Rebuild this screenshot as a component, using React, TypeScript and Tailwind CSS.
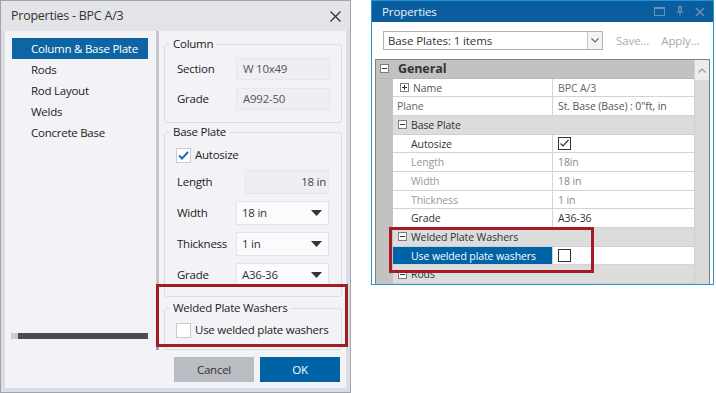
import React from "react";

const TreeBox = ({ plus }: { plus?: boolean }) => (
  <svg width="9" height="9" viewBox="0 0 9 9" className="shrink-0">
    <rect x="0.5" y="0.5" width="8" height="8" fill="#fff" stroke="#7d7d7d" />
    <line x1="2" y1="4.5" x2="7" y2="4.5" stroke="#333" />
    {plus && <line x1="4.5" y1="2" x2="4.5" y2="7" stroke="#333" />}
  </svg>
);

const Caret = () => (
  <svg width="11" height="6" viewBox="0 0 11 6">
    <path d="M0 0H11L5.5 6Z" fill="#333" />
  </svg>
);

const Combo = ({ value }: { value: string }) => (
  <div className="w-[93px] h-[24px] bg-[#fbfbfd] border border-[#e3e4e9] flex items-center pl-[5px] pr-[6px] text-[#333]">
    <span className="flex-1">{value}</span>
    <Caret />
  </div>
);

const ReadOnly = ({ value }: { value: string }) => (
  <div className="w-[94px] h-[22px] bg-[#efeff3] border border-[#e6e7eb] flex items-center pl-[6px] text-[#555]">
    {value}
  </div>
);

const Row = ({ label, children, mt }: { label: string; children: React.ReactNode; mt: string }) => (
  <div className={`flex items-center ${mt}`}>
    <span className="w-[59px] text-[#222]">{label}</span>
    {children}
  </div>
);

const navItems = ["Column & Base Plate", "Rods", "Rod Layout", "Welds", "Concrete Base"];

interface GridRow {
  kind: "cat" | "sub" | "prop";
  label: string;
  value?: string;
  indent?: string;
  plus?: boolean;
  labelColor?: string;
  valueColor?: string;
  check?: boolean;
  selected?: boolean;
}

const rows: GridRow[] = [
  { kind: "cat", label: "General" },
  { kind: "prop", label: "Name", value: "BPC A/3", plus: true, labelColor: "text-[#555]", valueColor: "text-[#666]" },
  { kind: "prop", label: "Plane", value: "St. Base (Base) : 0\"ft, in", indent: "pl-[4px]", labelColor: "text-[#666]", valueColor: "text-[#555]" },
  { kind: "sub", label: "Base Plate" },
  { kind: "prop", label: "Autosize", check: true, labelColor: "text-[#333]" },
  { kind: "prop", label: "Length", value: "18in", labelColor: "text-[#999]", valueColor: "text-[#888]" },
  { kind: "prop", label: "Width", value: "18 in", labelColor: "text-[#999]", valueColor: "text-[#888]" },
  { kind: "prop", label: "Thickness", value: "1 in", labelColor: "text-[#999]", valueColor: "text-[#888]" },
  { kind: "prop", label: "Grade", value: "A36-36", labelColor: "text-[#333]", valueColor: "text-[#333]" },
  { kind: "sub", label: "Welded Plate Washers" },
  { kind: "prop", label: "Use welded plate washers", check: false, selected: true },
  { kind: "sub", label: "Rods" },
];

const SmallCheck = ({ checked }: { checked: boolean }) => (
  <svg width="13" height="13" viewBox="0 0 13 13">
    <rect x="0.5" y="0.5" width="12" height="12" fill="#fff" stroke="#333" />
    {checked && <path d="M2.5 6.5L5 9L10.5 3" fill="none" stroke="#333" strokeWidth="1.2" />}
  </svg>
);

const GridLine = ({ r }: { r: GridRow }) => {
  if (r.kind === "cat") {
    return (
      <div className="h-[19px] flex items-center bg-[#c2c2c2] border-b border-[#b8b8b8]">
        <div className="w-[17px] flex justify-center"><TreeBox /></div>
        <span className="pl-[5px] font-bold text-[12.5px] text-[#333]">{r.label}</span>
      </div>
    );
  }
  if (r.kind === "sub") {
    return (
      <div className="h-[19px] flex bg-[#c2c2c2]">
        <div className="w-[17px]" />
        <div className="flex-1 flex items-center bg-[#dcdcdc] border-b border-[#cfcfcf] pl-[5px] gap-[4px] text-[#333]">
          <TreeBox />
          <span>{r.label}</span>
        </div>
      </div>
    );
  }
  return (
    <div className="h-[19px] flex bg-[#c2c2c2]">
      <div className="w-[17px]" />
      <div
        className={`w-[160px] flex items-center border-b border-r border-[#d4d4d4] ${
          r.selected ? "bg-[#0063a6] text-white" : `bg-white ${r.labelColor ?? ""}`
        } ${r.plus ? "pl-[7px] gap-[4px]" : r.indent ?? "pl-[18px]"}`}
      >
        {r.plus && <TreeBox plus />}
        <span>{r.label}</span>
      </div>
      <div className={`flex-1 flex items-center bg-white border-b border-[#d4d4d4] pl-[5px] ${r.valueColor ?? ""}`}>
        {r.check !== undefined ? <SmallCheck checked={r.check} /> : r.value}
      </div>
    </div>
  );
};

export default function App() {
  return (
    <div className="w-[716px] h-[393px] bg-white flex items-start relative overflow-hidden font-['Segoe_UI','Open_Sans',sans-serif] text-[11.5px] leading-[16px] tracking-[-0.25px]">
      {/* dialog */}
      <div className="w-[351px] h-[393px] flex flex-col bg-[#dcdde2] border border-[#a0a3ab]">
        <div className="h-[30px] flex items-center justify-between pl-[10px] pr-[9px] bg-[#e3e4e8] text-[12.5px] text-[#333]">
          <span>Properties - BPC A/3</span>
          <svg width="11" height="11" viewBox="0 0 11 11">
            <path d="M0.5 0.5L10.5 10.5M10.5 0.5L0.5 10.5" stroke="#333" strokeWidth="1.3" />
          </svg>
        </div>
        <div className="flex-1 flex mx-[4px] mb-[4px] bg-[#f3f3f7]">
          {/* nav */}
          <div className="w-[151px] flex flex-col pt-[7px] pl-[7px] pr-[8px]">
            {navItems.map((n, i) => (
              <div
                key={n}
                className={`h-[21px] flex items-center pl-[19px] ${i === 0 ? "bg-[#0f64a3] text-white" : "text-[#222]"}`}
              >
                {n}
              </div>
            ))}
            <div className="mt-auto mb-[49px] flex h-[6px] -ml-[1px]">
              <div className="w-[7px] bg-[#c9ccd2]" />
              <div className="flex-1 bg-[#4a4d55]" />
            </div>
          </div>
          {/* splitter */}
          <div className="w-[3px] flex flex-col">
            <div className="h-[316px] bg-[#c4c6cc]" />
            <div className="h-[3px] bg-[#9ea2aa]" />
          </div>
          {/* right */}
          <div className="flex-1 flex flex-col">
            <div className="h-[319px] pl-[5px] pr-[4px] flex flex-col">
              <fieldset className="mt-[5px] border border-[#dcdde2] rounded-[3px]">
                <legend className="ml-[4px] px-[4px] text-[#222]">Column</legend>
                <div className="pl-[12px] pt-[6px] pb-[12px]">
                  <Row label="Section" mt="">
                    <ReadOnly value="W 10x49" />
                  </Row>
                  <Row label="Grade" mt="mt-[8px]">
                    <ReadOnly value="A992-50" />
                  </Row>
                </div>
              </fieldset>
              <fieldset className="mt-[1px] border border-[#dcdde2] rounded-[3px]">
                <legend className="ml-[4px] px-[4px] text-[#222]">Base Plate</legend>
                <div className="pl-[11px] pt-[7px] pb-[9px]">
                  <div className="flex items-center gap-[4px]">
                    <div className="w-[15px] h-[15px] bg-white border border-[#c9cad0] flex items-center justify-center">
                      <svg width="11" height="9" viewBox="0 0 11 9">
                        <path d="M1 4.5L4 7.5L10 1" fill="none" stroke="#1d6fb8" strokeWidth="2" />
                      </svg>
                    </div>
                    <span className="text-[#222]">Autosize</span>
                  </div>
                  <div className="pl-[1px]">
                    <Row label="Length" mt="mt-[7px]">
                      <div className="ml-[9px] w-[84px] h-[24px] bg-[#efeff3] border border-[#e6e7eb] flex items-center justify-end pr-[2px] text-[#444]">
                        18 in
                      </div>
                    </Row>
                    <Row label="Width" mt="mt-[7px]">
                      <Combo value="18 in" />
                    </Row>
                    <Row label="Thickness" mt="mt-[7px]">
                      <Combo value="1 in" />
                    </Row>
                    <Row label="Grade" mt="mt-[7px]">
                      <Combo value="A36-36" />
                    </Row>
                  </div>
                </div>
              </fieldset>
              <fieldset className="mt-[3px] flex-1 border border-[#dcdde2] rounded-[3px]">
                <legend className="ml-[4px] px-[4px] text-[#222]">Welded Plate Washers</legend>
                <div className="pl-[11px] pt-[6px] flex items-center gap-[4px]">
                  <div className="w-[15px] h-[15px] bg-white border border-[#c9cad0]" />
                  <span className="text-[#222]">Use welded plate washers</span>
                </div>
              </fieldset>
            </div>
            <div className="flex justify-end gap-[6px] pt-[7px] pr-[6px]">
              <button className="w-[80px] h-[25px] bg-[#babcc3] text-[#333]">Cancel</button>
              <button className="w-[80px] h-[25px] bg-[#0063a6] text-white">OK</button>
            </div>
          </div>
        </div>
      </div>

      {/* properties window */}
      <div className="ml-[20px] w-[343px] h-[285px] flex flex-col border border-[#2196d8] bg-white text-[10.5px] leading-[14px] tracking-[-0.1px]">
        <div className="h-[21px] bg-[#0b5e9e] flex items-center justify-between pl-[10px] pr-[8px]">
          <span className="text-[#eef3f8] text-[11.5px]">Properties</span>
          <div className="flex items-center gap-[10px]">
            <svg width="11" height="9" viewBox="0 0 11 9">
              <rect x="0.5" y="0.5" width="10" height="8" fill="none" stroke="#6b92b9" />
              <line x1="0" y1="1.5" x2="11" y2="1.5" stroke="#6b92b9" />
            </svg>
            <svg width="10" height="11" viewBox="0 0 10 11">
              <path d="M3 0.5H7M3.5 0.5V6M6.5 0.5V6M1.5 6H8.5M5 6V10.5M5 1V6" stroke="#6b92b9" fill="none" />
            </svg>
            <svg width="10" height="10" viewBox="0 0 10 10">
              <path d="M1 1L9 9M9 1L1 9" stroke="#6b92b9" strokeWidth="1.5" />
            </svg>
          </div>
        </div>
        <div className="flex items-center mt-[9px] ml-[11px]">
          <div className="w-[220px] h-[19px] border border-[#b3b3b3] flex items-center">
            <span className="flex-1 pl-[4px] text-[#333] text-[11.5px]">Base Plates: 1 items</span>
            <div className="w-[15px] h-full border-l border-[#c8c8c8] bg-[#f3f3f3] flex items-center justify-center">
              <svg width="8" height="5" viewBox="0 0 8 5">
                <path d="M0.5 0.5L4 4L7.5 0.5" fill="none" stroke="#666" strokeWidth="1.2" />
              </svg>
            </div>
          </div>
          <span className="ml-[13px] text-[#a9a9a9] text-[11.5px]">Save...</span>
          <span className="ml-[12px] text-[#a9a9a9] text-[11.5px]">Apply...</span>
        </div>
        <div className="mt-[9px] mx-[3px] flex-1 flex border-t border-l border-r border-[#828282] overflow-hidden">
          <div className="flex-1 flex flex-col">
            {rows.map((r) => (
              <GridLine key={r.label} r={r} />
            ))}
          </div>
          <div className="w-[15px] bg-[#d9d9d9] flex flex-col border-l border-[#cfcfcf]">
            <div className="h-[20px] bg-[#ececec] flex items-center justify-center">
              <svg width="8" height="5" viewBox="0 0 8 5">
                <path d="M0.5 4.5L4 1L7.5 4.5" fill="none" stroke="#999" strokeWidth="1.2" />
              </svg>
            </div>
          </div>
        </div>
      </div>

      {/* annotation boxes */}
      <div className="absolute left-[156px] top-[284px] w-[192px] h-[63px] border-[3px] border-[#a31c23]" />
      <div className="absolute left-[389px] top-[227px] w-[205px] h-[46px] border-[3px] border-[#a31c23]" />
    </div>
  );
}
